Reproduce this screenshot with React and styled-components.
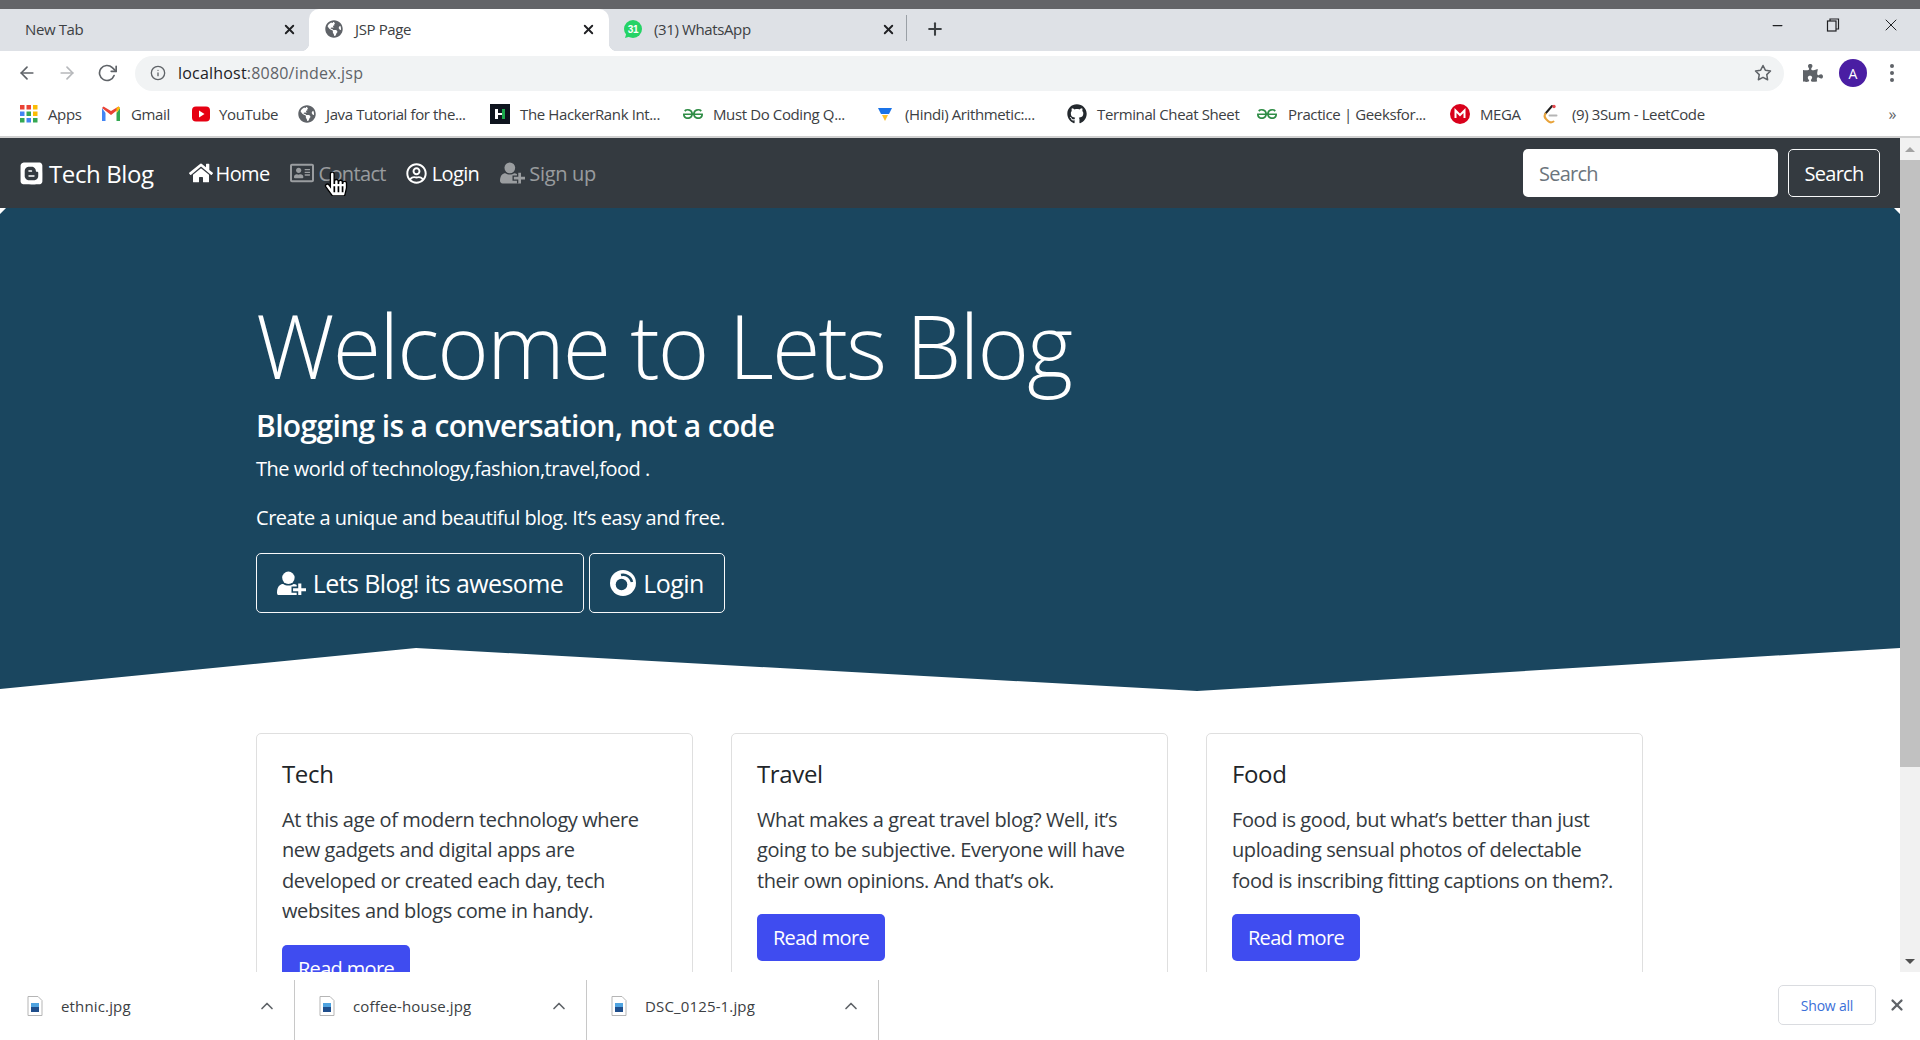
import React from "react";
import styled, { createGlobalStyle } from "styled-components";
import {
  FaBlogger, FaHome, FaRegAddressCard, FaRegUserCircle, FaGlobeAmericas,
  FaGithub, FaPuzzlePiece, FaHandPointer,
} from "react-icons/fa";
import { SiGeeksforgeeks } from "react-icons/si";
import { FiArrowLeft, FiArrowRight, FiRotateCw, FiInfo, FiStar, FiX, FiChevronUp, FiPlus, FiMinus } from "react-icons/fi";

const Global = createGlobalStyle`
  html, body { margin: 0; padding: 0; background: #fff; }
  * { box-sizing: border-box; }
  body { font-family: "Open Sans", "Noto Sans", sans-serif; }
`;

const Screen = styled.div`
  width: 1920px;
  height: 1040px;
  overflow: hidden;
  display: flex;
  flex-direction: column;
`;

const TopEdge = styled.div`
  height: 9px;
  background: #636468;
`;

const TabStrip = styled.div`
  height: 42px;
  background: #dee1e6;
  display: flex;
  align-items: stretch;
`;

const Tab = styled.div`
  position: relative;
  width: ${(p) => p.$w}px;
  display: flex;
  align-items: center;
  padding: 0 ${(p) => p.$end}px 2px ${(p) => p.$pad}px;
  gap: ${(p) => p.$gap ?? 11}px;
  font-size: 15px;
  letter-spacing: -0.38px;
  color: #3c4043;
  border-radius: 10px 10px 0 0;
  background: ${(p) => (p.$active ? "#fff" : "transparent")};
`;

const TabFlare = styled.i`
  position: absolute;
  bottom: 0;
  width: 8px;
  height: 8px;
  ${(p) => (p.$right ? "right: -8px;" : "left: -8px;")}
  background: radial-gradient(circle at ${(p) => (p.$right ? "100% 0" : "0 0")}, transparent 8px, #fff 8.5px);
`;

const TabTitle = styled.span`
  flex: 1;
`;

const TabClose = styled(FiX)`
  font-size: 15px;
  color: #202124;
  stroke-width: 3;
`;

const TabDivider = styled.div`
  width: 1px;
  height: 26px;
  margin: 6px 0 0 1px;
  background: #9aa0a6;
`;

const NewTab = styled(FiPlus)`
  font-size: 20px;
  margin: 10px 0 0 18px;
  color: #3c4043;
  stroke-width: 2.5;
`;

const WindowControls = styled.div`
  margin-left: auto;
  display: flex;
  align-items: center;
  gap: 41px;
  padding: 0 19px 10px 0;
  color: #202124;
`;

const Toolbar = styled.div`
  height: 44px;
  background: #fff;
  display: flex;
  align-items: center;
  padding: 0 14px 0 17px;
  color: #5f6368;
`;

const NavArrows = styled.div`
  display: flex;
  align-items: center;
  gap: 20px;
  font-size: 20px;
  width: 118px;
`;

const UrlBar = styled.div`
  width: 1649px;
  height: 35px;
  border-radius: 18px;
  background: #f1f3f4;
  display: flex;
  align-items: center;
  padding: 0 12px 0 15px;
  gap: 12px;
  font-size: 16px;
  letter-spacing: 0.2px;
  color: #5f6368;
`;

const UrlHost = styled.span`
  flex: 1;
  b { font-weight: 400; color: #202124; }
`;

const ToolIcons = styled.div`
  display: flex;
  align-items: center;
  margin-left: 19px;
  gap: 16px;
  font-size: 20px;
`;

const Avatar = styled.div`
  width: 28px;
  height: 28px;
  border-radius: 50%;
  background: #4a1ea3;
  color: #fff;
  font-size: 14px;
  display: flex;
  align-items: center;
  justify-content: center;
`;

const Dots = styled.div`
  display: flex;
  flex-direction: column;
  gap: 3px;
  margin-left: 7px;
  i {
    width: 4px;
    height: 4px;
    border-radius: 50%;
    background: #5f6368;
  }
`;

const Bookmarks = styled.div`
  height: 43px;
  background: #fff;
  border-bottom: 2px solid #d0d0d0;
  display: flex;
  align-items: center;
  padding: 0 0 4px 20px;
  font-size: 15px;
  letter-spacing: -0.38px;
  color: #3c4043;
`;

const Bookmark = styled.div`
  width: ${(p) => p.$w}px;
  display: flex;
  align-items: center;
  gap: ${(p) => p.$gap ?? 10}px;
  white-space: nowrap;
  svg { flex: none; }
`;

const MoreMarks = styled.span`
  margin-left: auto;
  padding-right: 24px;
  color: #5f6368;
  font-size: 16px;
`;

const Viewport = styled.div`
  height: 834px;
  display: flex;
  overflow: hidden;
`;

const Page = styled.div`
  position: relative;
  width: 1900px;
  overflow: hidden;
`;

const Navbar = styled.nav`
  height: 70px;
  background: #343a40;
  display: flex;
  align-items: center;
  padding: 0 20px 0 19px;
  color: #fff;
`;

const Brand = styled.div`
  display: flex;
  align-items: center;
  gap: 5px;
  font-size: 24px;
  letter-spacing: -0.4px;
  margin-right: 35px;
`;

const NavItem = styled.div`
  display: flex;
  align-items: center;
  gap: ${(p) => p.$gap ?? 5}px;
  font-size: 20px;
  letter-spacing: ${(p) => p.$track ?? -0.65}px;
  margin-right: ${(p) => p.$after ?? 20}px;
  color: ${(p) => (p.$dim ? "rgba(255,255,255,.5)" : "#fff")};
`;

const SearchForm = styled.div`
  margin-left: auto;
  display: flex;
  gap: 10px;
`;

const SearchInput = styled.div`
  width: 255px;
  height: 48px;
  border-radius: 5px;
  background: #fff;
  color: #6c757d;
  font-size: 20px;
  letter-spacing: -0.75px;
  display: flex;
  align-items: center;
  padding-left: 16px;
`;

const SearchButton = styled.div`
  width: 92px;
  height: 48px;
  border-radius: 5px;
  border: 1px solid #f8f9fa;
  font-size: 20px;
  letter-spacing: -0.75px;
  display: flex;
  align-items: center;
  justify-content: center;
`;

const Hero = styled.section`
  height: 483px;
  background: #1a465f;
  color: #fff;
  padding: 84px 256px 0;
  clip-path: polygon(6px 0, 1894px 0, 1900px 6px, 1900px 440px, 1197px 483px, 416px 440px, 0 481px, 0 6px);
`;

const HeroTitle = styled.h1`
  margin: 0;
  font-size: 88px;
  font-weight: 300;
  line-height: 106px;
  letter-spacing: -1.85px;
`;

const HeroSub = styled.h3`
  margin: 7px 0 0;
  font-size: 30px;
  font-weight: 600;
  line-height: 42px;
  letter-spacing: -0.65px;
`;

const HeroText = styled.p`
  margin: ${(p) => p.$top}px 0 0;
  font-size: 20px;
  line-height: 30px;
  letter-spacing: -0.47px;
`;

const HeroButtons = styled.div`
  display: flex;
  gap: 5px;
  margin-top: 20px;
`;

const HeroButton = styled.div`
  height: 60px;
  width: ${(p) => p.$w}px;
  border: 1px solid #f8f9fa;
  border-radius: 5px;
  display: flex;
  align-items: center;
  justify-content: center;
  gap: 7px;
  font-size: 25px;
  letter-spacing: -0.6px;
`;

const Cards = styled.div`
  display: flex;
  gap: 38px;
  padding: 42px 0 0 256px;
`;

const Card = styled.article`
  width: 437px;
  height: 400px;
  border: 1px solid #dfdfdf;
  border-radius: 5px;
  padding: 25px 25px;
`;

const CardTitle = styled.h5`
  margin: 0 0 16px;
  font-size: 24px;
  font-weight: 400;
  line-height: 30px;
  letter-spacing: -0.35px;
  color: #212529;
`;

const CardText = styled.p`
  margin: 0 0 18px;
  font-size: 20px;
  line-height: 30.4px;
  letter-spacing: -0.41px;
  color: #343a40;
`;

const ReadMore = styled.div`
  width: 128px;
  height: 47px;
  border-radius: 5px;
  background: #3f4cf0;
  color: #fff;
  font-size: 20px;
  letter-spacing: -0.65px;
  display: flex;
  align-items: center;
  justify-content: center;
`;

const Pointer = styled(FaHandPointer)`
  position: absolute;
  left: 324px;
  top: 34px;
  font-size: 24px;
  color: #fff;
  stroke: #000;
  stroke-width: 28;
`;

const Scrollbar = styled.div`
  width: 20px;
  background: #f1f1f1;
  display: flex;
  flex-direction: column;
  align-items: center;
`;

const ScrollArrow = styled.div`
  height: 22px;
  width: 100%;
  flex: none;
  display: flex;
  align-items: center;
  justify-content: center;
  &::after {
    content: "";
    border-left: 5px solid transparent;
    border-right: 5px solid transparent;
    ${(p) => (p.$down ? "border-top: 5px solid #505050;" : "border-bottom: 5px solid #a3a3a3;")}
  }
`;

const ScrollThumb = styled.div`
  width: 100%;
  height: 607px;
  background: #c1c1c1;
`;

const ScrollTrack = styled.div`
  flex: 1;
`;

const Shelf = styled.div`
  height: 68px;
  background: #fff;
  display: flex;
  align-items: center;
  padding-left: 3px;
`;

const ShelfItem = styled.div`
  width: 292px;
  height: 60px;
  margin-top: 8px;
  border-right: 1px solid #c8c8c8;
  display: flex;
  align-items: center;
  padding: 0 17px 9px 24px;
  gap: 18px;
  font-size: 15px;
  letter-spacing: 0.15px;
  color: #3c4043;
`;

const ShelfName = styled.span`
  flex: 1;
`;

const ShelfChevron = styled(FiChevronUp)`
  font-size: 20px;
  color: #5f6368;
`;

const ShowAll = styled.div`
  margin-left: auto;
  width: 98px;
  height: 40px;
  margin-bottom: 2px;
  border: 1px solid #dadce0;
  border-radius: 5px;
  color: #3b6fd8;
  font-size: 14px;
  letter-spacing: -0.2px;
  display: flex;
  align-items: center;
  justify-content: center;
`;

const ShelfClose = styled(FiX)`
  font-size: 18px;
  margin: 0 14px 2px 12px;
  color: #5f6368;
  stroke-width: 3;
`;

const RestoreIcon = () => (
  <svg width="14" height="14" viewBox="0 0 14 14" fill="none" stroke="#202124" strokeWidth="1.2">
    <rect x="1.5" y="3" width="8.5" height="10" />
    <path d="M4 3V1h8.5v10H10" />
  </svg>
);

const GmailIcon = () => (
  <svg width="20" height="16" viewBox="0 0 20 16">
    <path d="M1 2v13h3.500V7z" fill="#4285f4" />
    <path d="M19 2v13h-3.500V7z" fill="#34a853" />
    <path d="M1 2l9 7 9-7-1.500-1.500L10 5 2.500.5z" fill="#ea4335" />
    <path d="M15.500 7L19 2l-1.500-1.500-2 1.500z" fill="#fbbc04" />
  </svg>
);

const YoutubeIcon = () => (
  <svg width="20" height="20" viewBox="0 0 20 20">
    <rect x="1" y="2.500" width="18" height="15" rx="4" fill="#e60012" />
    <path d="M8 6.500l5.500 3.500L8 13.500z" fill="#fff" />
  </svg>
);

const AppsIcon = () => {
  const colors = ["#ea4335", "#ea4335", "#fbbc04", "#4285f4", "#34a853", "#fbbc04", "#34a853", "#4285f4", "#34a853"];
  return (
    <svg width="18" height="18" viewBox="0 0 18 18">
      {colors.map((c, i) => (
        <rect key={i} x={(i % 3) * 6.5} y={Math.floor(i / 3) * 6.5} width="4.500" height="4.500" fill={c} />
      ))}
    </svg>
  );
};

const HackerRankIcon = () => (
  <svg width="20" height="20" viewBox="0 0 20 20">
    <rect width="20" height="20" fill="#0e141e" />
    <rect x="5" y="5" width="3" height="10" fill="#fff" />
    <rect x="12" y="5" width="3" height="10" fill="#1ba94c" />
    <rect x="8" y="9" width="4" height="2" fill="#fff" />
  </svg>
);

const HindiIcon = () => (
  <svg width="20" height="20" viewBox="0 0 20 20">
    <path d="M3 4h14l-3 6H6z" fill="#1a73e8" />
    <path d="M7 11h6l-3 6z" fill="#fbc02d" />
  </svg>
);

const MegaIcon = () => (
  <svg width="20" height="20" viewBox="0 0 20 20">
    <circle cx="10" cy="10" r="10" fill="#d9001b" />
    <path d="M5.500 14V6.500L10 11l4.500-4.500V14" fill="none" stroke="#fff" strokeWidth="2" />
  </svg>
);

const LeetCodeIcon = () => (
  <svg width="20" height="22" viewBox="0 0 20 22" fill="none">
    <path d="M11 3L4.500 10.500" stroke="#1f1f1f" strokeWidth="2" strokeLinecap="round" />
    <path d="M4.500 10.500c-1.500 2-1 4 .5 5.500l2 2c1.500 1.500 4 1.500 5.500.5" stroke="#e8a33a" strokeWidth="2" strokeLinecap="round" />
    <path d="M8.500 12.500h7" stroke="#b5b5b5" strokeWidth="2" strokeLinecap="round" />
    <circle cx="13" cy="3.500" r="1.700" fill="#e5484d" />
  </svg>
);

const WhatsAppBadge = () => (
  <svg width="20" height="20" viewBox="0 0 20 20">
    <circle cx="10" cy="10" r="9" fill="#25d366" />
    <path d="M2 19l1.500-5 3.500 3.500z" fill="#25d366" />
    <text x="10" y="13.500" fontSize="10" fontWeight="700" textAnchor="middle" fill="#fff" fontFamily="Liberation Sans">31</text>
  </svg>
);

const FileIcon = () => (
  <svg width="16" height="20" viewBox="0 0 16 20">
    <path d="M1 .5h10l4 4v15H1z" fill="#fff" stroke="#b5b5b5" />
    <rect x="4" y="7" width="8" height="9" fill="#1f4e8c" />
    <rect x="4" y="7" width="8" height="4" fill="#4fa3e0" />
  </svg>
);

const RingIcon = () => (
  <svg width="26" height="26" viewBox="0 0 26 26">
    <circle cx="13" cy="13" r="13" fill="#fff" />
    <circle cx="11.500" cy="14.500" r="5.800" fill="#1a465f" />
    <path d="M11 5a9 9 0 0 1 11 7" fill="none" stroke="#1a465f" strokeWidth="2.400" />
  </svg>
);

const UserPlusIcon = ({ size, halo }) => (
  <svg width={size} height={size * 0.86} viewBox="0 0 28 24">
    <circle cx="11" cy="6.500" r="6" fill="currentColor" />
    <path d="M0 21c0-6 3-8.500 6-8.500 1.500 1 3 1.500 5 1.500s3.500-.5 5-1.500c2 0 4 1 5 3v8.500H3c-2 0-3-1.500-3-3z" fill="currentColor" />
    <path d="M19 10.500h6v4.500h3v6h-3v3h-6v-3h-5v-6h5z" fill={halo} />
    <path d="M20.500 12h3v4.500h4.500v3h-4.500V24h-3v-4.500H15.500v-3h5z" fill="currentColor" />
  </svg>
);

const marks = [
  { w: 81, gap: 10, icon: <AppsIcon />, label: "Apps" },
  { w: 90, gap: 10, icon: <GmailIcon />, label: "Gmail" },
  { w: 107, gap: 8, icon: <YoutubeIcon />, label: "YouTube" },
  { w: 192, gap: 10, icon: <FaGlobeAmericas size={18} color="#5f6368" />, label: "Java Tutorial for the..." },
  { w: 193, gap: 10, icon: <HackerRankIcon />, label: "The HackerRank Int..." },
  { w: 192, gap: 10, icon: <SiGeeksforgeeks size={20} color="#2f8d46" />, label: "Must Do Coding Q..." },
  { w: 192, gap: 10, icon: <HindiIcon />, label: "(Hindi) Arithmetic:..." },
  { w: 190, gap: 10, icon: <FaGithub size={20} color="#24292e" />, label: "Terminal Cheat Sheet" },
  { w: 193, gap: 11, icon: <SiGeeksforgeeks size={20} color="#2f8d46" />, label: "Practice | Geeksfor..." },
  { w: 91, gap: 10, icon: <MegaIcon />, label: "MEGA" },
  { w: 220, gap: 11, icon: <LeetCodeIcon />, label: "(9) 3Sum - LeetCode" },
];

const cards = [
  {
    title: "Tech",
    text: "At this age of modern technology where new gadgets and digital apps are developed or created each day, tech websites and blogs come in handy.",
  },
  {
    title: "Travel",
    text: "What makes a great travel blog? Well, it’s going to be subjective. Everyone will have their own opinions. And that’s ok.",
  },
  {
    title: "Food",
    text: "Food is good, but what’s better than just uploading sensual photos of delectable food is inscribing fitting captions on them?.",
  },
];

const downloads = ["ethnic.jpg", "coffee-house.jpg", "DSC_0125-1.jpg"];

export default function App() {
  return (
    <Screen>
      <Global />
      <TopEdge />
      <TabStrip>
        <Tab $w={309} $pad={25} $end={12}>
          <TabTitle>New Tab</TabTitle>
          <TabClose />
        </Tab>
        <Tab $w={300} $pad={16} $end={13} $gap={12} $active>
          <TabFlare />
          <FaGlobeAmericas size={18} color="#5f6368" />
          <TabTitle>JSP Page</TabTitle>
          <TabClose />
          <TabFlare $right />
        </Tab>
        <Tab $w={296} $pad={14} $end={9}>
          <WhatsAppBadge />
          <TabTitle>(31) WhatsApp</TabTitle>
          <TabClose />
        </Tab>
        <TabDivider />
        <NewTab />
        <WindowControls>
          <FiMinus size={15} />
          <RestoreIcon />
          <FiX size={20} strokeWidth={1.2} />
        </WindowControls>
      </TabStrip>
      <Toolbar>
        <NavArrows>
          <FiArrowLeft />
          <FiArrowRight color="#b6b8bb" />
          <FiRotateCw />
        </NavArrows>
        <UrlBar>
          <FiInfo size={16} />
          <UrlHost>
            <b>localhost</b>:8080/index.jsp
          </UrlHost>
          <FiStar size={18} />
        </UrlBar>
        <ToolIcons>
          <FaPuzzlePiece />
          <Avatar>A</Avatar>
          <Dots>
            <i />
            <i />
            <i />
          </Dots>
        </ToolIcons>
      </Toolbar>
      <Bookmarks>
        {marks.map((m) => (
          <Bookmark key={m.label} $w={m.w} $gap={m.gap}>
            {m.icon}
            {m.label}
          </Bookmark>
        ))}
        <MoreMarks>»</MoreMarks>
      </Bookmarks>
      <Viewport>
        <Page>
          <Navbar>
            <Brand>
              <FaBlogger size={25} />
              Tech Blog
            </Brand>
            <NavItem $gap={3}>
              <FaHome size={24} />
              Home
            </NavItem>
            <NavItem $dim>
              <FaRegAddressCard size={24} />
              Contact
            </NavItem>
            <NavItem $after={21}>
              <FaRegUserCircle size={21} />
              Login
            </NavItem>
            <NavItem $dim $gap={4} $track={-0.3}>
              <UserPlusIcon size={25} halo="#343a40" />
              Sign up
            </NavItem>
            <SearchForm>
              <SearchInput>Search</SearchInput>
              <SearchButton>Search</SearchButton>
            </SearchForm>
          </Navbar>
          <Hero>
            <HeroTitle>Welcome to Lets Blog</HeroTitle>
            <HeroSub>Blogging is a conversation, not a code</HeroSub>
            <HeroText $top={7}>The world of technology,fashion,travel,food .</HeroText>
            <HeroText $top={19}>Create a unique and beautiful blog. It’s easy and free.</HeroText>
            <HeroButtons>
              <HeroButton $w={328}>
                <UserPlusIcon size={29} halo="#1a465f" />
                Lets Blog! its awesome
              </HeroButton>
              <HeroButton $w={136}>
                <RingIcon />
                Login
              </HeroButton>
            </HeroButtons>
          </Hero>
          <Cards>
            {cards.map((c) => (
              <Card key={c.title}>
                <CardTitle>{c.title}</CardTitle>
                <CardText>{c.text}</CardText>
                <ReadMore>Read more</ReadMore>
              </Card>
            ))}
          </Cards>
          <Pointer />
        </Page>
        <Scrollbar>
          <ScrollArrow />
          <ScrollThumb />
          <ScrollTrack />
          <ScrollArrow $down />
        </Scrollbar>
      </Viewport>
      <Shelf>
        {downloads.map((d) => (
          <ShelfItem key={d}>
            <FileIcon />
            <ShelfName>{d}</ShelfName>
            <ShelfChevron />
          </ShelfItem>
        ))}
        <ShowAll>Show all</ShowAll>
        <ShelfClose />
      </Shelf>
    </Screen>
  );
}
